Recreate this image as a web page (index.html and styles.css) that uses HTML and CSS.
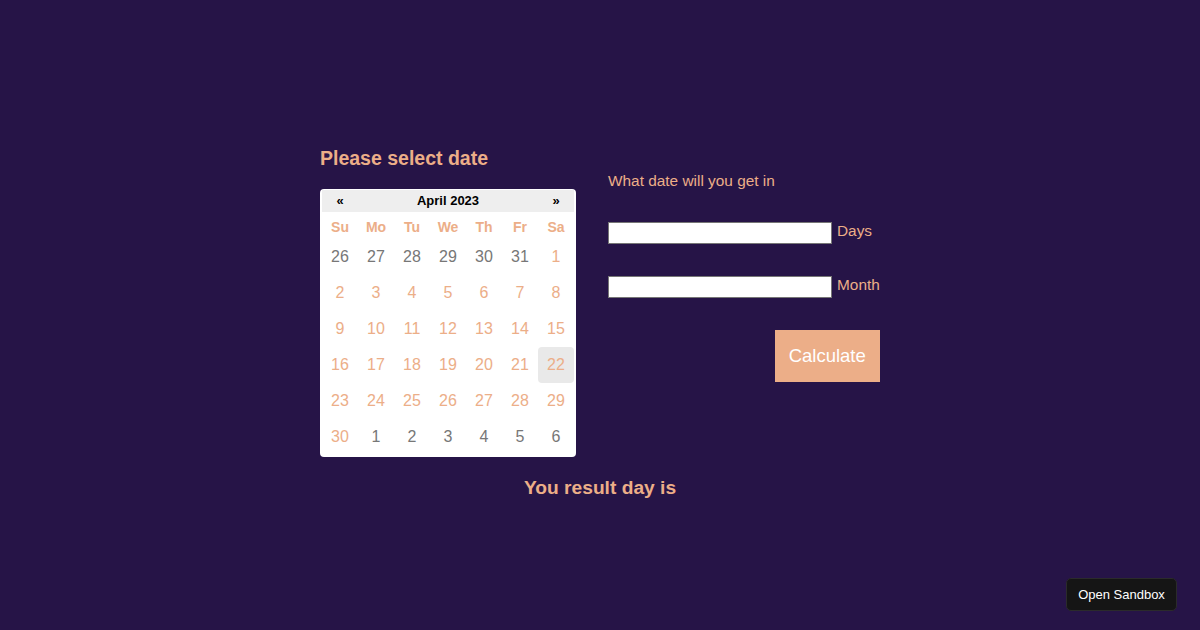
FILE: index.html
```html
<!DOCTYPE html>
<html>
    <head>
        <title>Date calculator</title>
        <link rel="stylesheet" href="styles.css">
    </head>
    <body>
        <div class="page">
            <div class="picker-row">
                <div class="left">
                    <h3 class="title">Please select date</h3>
                    <div class="calendar">
                        <div class="cal-head">
                            <span class="nav">&laquo;</span>
                            <span class="month">April 2023</span>
                            <span class="nav">&raquo;</span>
                        </div>
                        <div class="dow">
                            <span>Su</span><span>Mo</span><span>Tu</span><span>We</span><span>Th</span><span>Fr</span><span>Sa</span>
                        </div>
                        <div class="days">
                            <span class="old">26</span><span class="old">27</span><span class="old">28</span><span class="old">29</span><span class="old">30</span><span class="old">31</span><span>1</span>
                            <span>2</span><span>3</span><span>4</span><span>5</span><span>6</span><span>7</span><span>8</span>
                            <span>9</span><span>10</span><span>11</span><span>12</span><span>13</span><span>14</span><span>15</span>
                            <span>16</span><span>17</span><span>18</span><span>19</span><span>20</span><span>21</span><span class="focused">22</span>
                            <span>23</span><span>24</span><span>25</span><span>26</span><span>27</span><span>28</span><span>29</span>
                            <span>30</span><span class="old">1</span><span class="old">2</span><span class="old">3</span><span class="old">4</span><span class="old">5</span><span class="old">6</span>
                        </div>
                    </div>
                </div>

                <div class="right">
                    <p class="question">What date will you get in</p>
                    <div class="field">
                        <input type="text" name="days" id="days">
                        <label for="days">Days</label>
                    </div>
                    <div class="field">
                        <input type="text" name="month" id="month">
                        <label for="month">Month</label>
                    </div>
                    <button class="calc">Calculate</button>
                </div>
            </div>

            <h3 class="result">You result day is</h3>
        </div>

        <button class="sandbox">Open Sandbox</button>
    </body>
</html>
```

FILE: styles.css
```css
body{
    margin: 0;
    background-color: #261447;
    font-family: "Liberation Sans", Arial, sans-serif;
    color: #ecae88;
}

.page{
    padding-top: 147px;
    display: flex;
    flex-direction: column;
    align-items: center;
}

.picker-row{
    display: flex;
    align-items: flex-start;
    gap: 32px;
    width: 560px;
}

.left{
    width: 256px;
}

.title{
    margin: 0 0 20px;
    font-size: 19.5px;
    line-height: 22px;
    font-weight: bold;
}

/* calendar */
.calendar{
    background: #fff;
    border-radius: 4px;
    padding: 1px 2px 2px;
}

.cal-head{
    display: flex;
    height: 22px;
    line-height: 22px;
    background: #eeeeee;
    font-size: 13px;
    font-weight: bold;
    color: #000;
    text-align: center;
}

.cal-head .nav{
    width: 36px;
}

.cal-head .month{
    flex: 1;
}

.dow,
.days{
    display: grid;
    grid-template-columns: repeat(7, 36px);
    text-align: center;
}

.dow span{
    height: 23px;
    line-height: 23px;
    padding-top: 4px;
    font-size: 14px;
    font-weight: bold;
}

.days span{
    height: 36px;
    line-height: 36px;
    font-size: 16px;
    border-radius: 4px;
}

.days .old{
    color: #777;
}

.days .focused{
    background: #e9e9e9;
}

/* right side form */
.right{
    padding-top: 25px;
    display: flex;
    flex-direction: column;
    align-items: flex-start;
}

.question{
    margin: 0;
    font-size: 15.4px;
    line-height: 18px;
}

.field{
    display: flex;
    align-items: flex-start;
    gap: 5px;
    margin-top: 32px;
    height: 22px;
}

.field input{
    box-sizing: border-box;
    width: 224px;
    height: 22px;
    margin: 0;
    border: 1px solid #767676;
    background: #fff;
}

.field label{
    font-size: 15.4px;
    line-height: 18px;
}

.calc{
    align-self: flex-end;
    margin-top: 32px;
    height: 52px;
    padding: 0 14px;
    border: none;
    background: #ecae88;
    color: #fff;
    font-family: "Liberation Sans", Arial, sans-serif;
    font-size: 18.5px;
}

.result{
    margin: 20px 0 0;
    font-size: 19.2px;
    line-height: 22px;
    font-weight: bold;
}

.sandbox{
    position: fixed;
    right: 23px;
    bottom: 19px;
    width: 111px;
    height: 33px;
    background: #151515;
    border: 1px solid #2b2b2b;
    border-radius: 5px;
    color: #fff;
    font-family: "Liberation Sans", Arial, sans-serif;
    font-size: 13px;
}
```
